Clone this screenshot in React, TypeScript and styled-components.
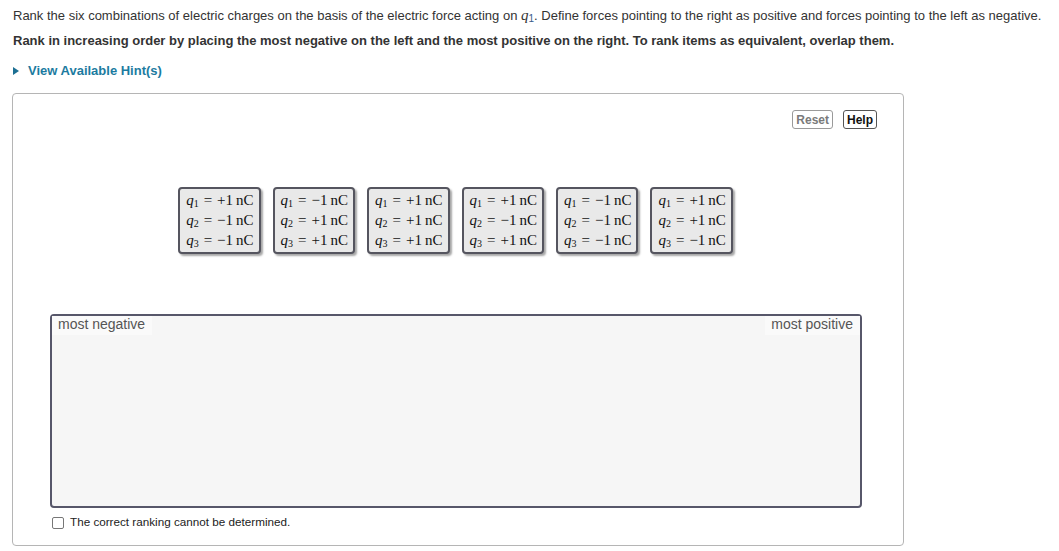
import styled, { createGlobalStyle } from 'styled-components';

type Charge = { q1: string; q2: string; q3: string };

const charges: Charge[] = [
  { q1: '+', q2: '−', q3: '−' },
  { q1: '−', q2: '+', q3: '+' },
  { q1: '+', q2: '+', q3: '+' },
  { q1: '+', q2: '−', q3: '+' },
  { q1: '−', q2: '−', q3: '−' },
  { q1: '+', q2: '+', q3: '−' },
];

const GlobalStyle = createGlobalStyle`
  body {
    margin: 0;
    background: #fff;
    font-family: "Liberation Sans", Arial, sans-serif;
    color: #333;
  }
`;

const ChargeLine = ({ n, sign }: { n: number; sign: string }) => (
  <Line>
    <MathQ>q</MathQ>
    <MathSub>{n}</MathSub>
    <Eq>=</Eq>
    <span>{sign}1</span>
    <Unit>nC</Unit>
  </Line>
);

export default function App() {
  return (
    <Page>
      <GlobalStyle />
      <Intro>
        Rank the six combinations of electric charges on the basis of the electric force acting on{' '}
        <MathQ>q</MathQ>
        <InlineSub>1</InlineSub>. Define forces pointing to the right as positive and forces pointing to the left
        as negative.
      </Intro>
      <Instruction>
        Rank in increasing order by placing the most negative on the left and the most positive on the right. To
        rank items as equivalent, overlap them.
      </Instruction>
      <Hint>
        <Triangle />
        View Available Hint(s)
      </Hint>
      <Panel>
        <Toolbar>
          <ToolButton $muted>Reset</ToolButton>
          <ToolButton>Help</ToolButton>
        </Toolbar>
        <Tiles>
          {charges.map((c, i) => (
            <Tile key={i}>
              <ChargeLine n={1} sign={c.q1} />
              <ChargeLine n={2} sign={c.q2} />
              <ChargeLine n={3} sign={c.q3} />
            </Tile>
          ))}
        </Tiles>
        <DropZone>
          <ZoneLabel>most negative</ZoneLabel>
          <ZoneLabel>most positive</ZoneLabel>
        </DropZone>
        <CheckRow>
          <Box />
          The correct ranking cannot be determined.
        </CheckRow>
      </Panel>
    </Page>
  );
}

const Page = styled.div`
  padding: 7px 0 6px 13px;
  width: 1046px;
`;

const Intro = styled.p`
  margin: 0;
  height: 16px;
  font-size: 13px;
  line-height: 16px;
  white-space: nowrap;
`;

const Instruction = styled.p`
  margin: 10px 0 0;
  height: 16px;
  font-size: 13px;
  line-height: 16px;
  font-weight: bold;
  white-space: nowrap;
`;

const Hint = styled.div`
  margin-top: 14px;
  height: 16px;
  display: flex;
  align-items: center;
  gap: 9px;
  font-size: 13px;
  line-height: 16px;
  font-weight: bold;
  color: #1c7ba0;
`;

const Triangle = styled.span`
  width: 0;
  height: 0;
  border-top: 4.5px solid transparent;
  border-bottom: 4.5px solid transparent;
  border-left: 6px solid #1c6f93;
`;

const Panel = styled.div`
  margin: 14px 0 0 -1px;
  width: 890px;
  height: 451px;
  border: 1px solid #b5b5b5;
  border-radius: 4px;
  display: flex;
  flex-direction: column;
`;

const Toolbar = styled.div`
  display: flex;
  justify-content: flex-end;
  gap: 10px;
  padding: 16px 26px 0 0;
`;

const ToolButton = styled.button<{ $muted?: boolean }>`
  height: 19px;
  padding: 0 3px;
  background: #fff;
  border: 1px solid ${({ $muted }) => ($muted ? '#9a9a9a' : '#555')};
  border-radius: 3px;
  font-family: "Liberation Sans", Arial, sans-serif;
  font-size: 12px;
  font-weight: bold;
  color: ${({ $muted }) => ($muted ? '#7a7a7a' : '#111')};
`;

const Tiles = styled.div`
  margin-top: 58px;
  display: flex;
  justify-content: center;
  gap: 12px;
  padding-right: 5px;
`;

const Tile = styled.div`
  padding: 1px 5px 2px 6px;
  background: #e9e9e9;
  border: 2px solid #55555f;
  border-radius: 4px;
  box-shadow: 2px 2px 2px rgba(0, 0, 0, 0.35);
  font-family: "Liberation Serif", "Times New Roman", serif;
  font-size: 15px;
  color: #111;
`;

const Line = styled.div`
  line-height: 20px;
  white-space: nowrap;
`;

const MathQ = styled.i`
  font-family: "Liberation Serif", "Times New Roman", serif;
  font-size: 15px;
`;

const MathSub = styled.sub`
  font-size: 10px;
  vertical-align: -2px;
  line-height: 0;
`;

const InlineSub = styled.sub`
  font-size: 10px;
  vertical-align: -2px;
  line-height: 0;
  color: #3a5a8a;
`;

const Eq = styled.span`
  margin: 0 5px;
`;

const Unit = styled.span`
  margin-left: 3px;
`;

const DropZone = styled.div`
  margin: 60px 0 0 37px;
  width: 808px;
  height: 190px;
  border: 2px solid #57576a;
  border-radius: 4px;
  background: #f6f6f6;
  display: flex;
  justify-content: space-between;
  align-items: flex-start;
`;

const ZoneLabel = styled.span`
  padding: 1px 7px 3px 6px;
  background: #fafafa;
  font-size: 14px;
  line-height: 15px;
  color: #555;
`;

const CheckRow = styled.label`
  margin: 6px 0 0 39px;
  display: flex;
  align-items: center;
  gap: 6px;
  font-size: 11.7px;
  color: #222;
`;

const Box = styled.span`
  width: 10px;
  height: 10px;
  margin-top: 3px;
  border: 1px solid #777;
  border-radius: 2px;
  background: #fff;
`;
